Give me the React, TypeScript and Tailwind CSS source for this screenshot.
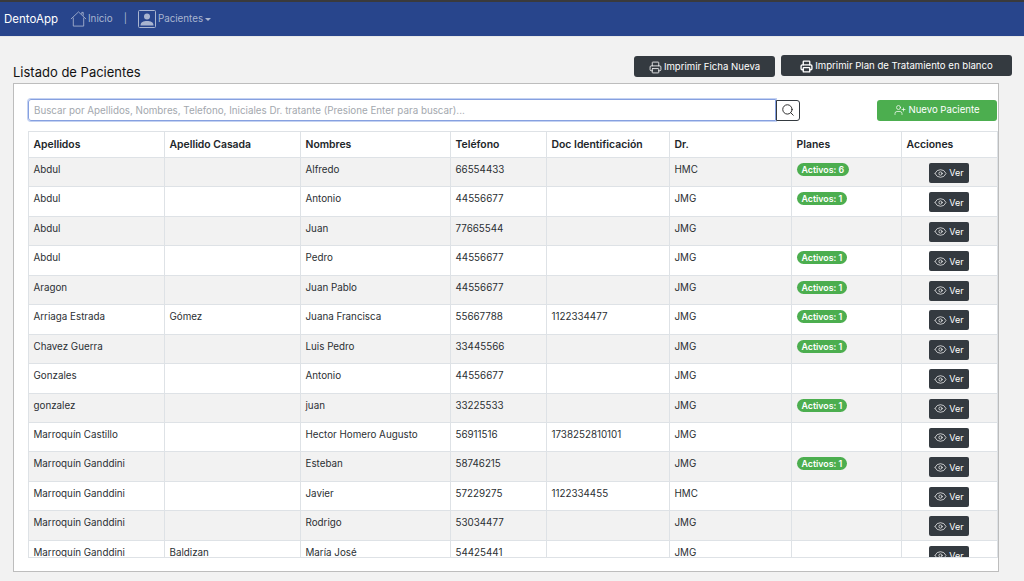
import { Eye, Printer, Search, UserPlus } from "lucide-react";

type Paciente = {
  apellidos: string;
  casada?: string;
  nombres: string;
  telefono: string;
  doc?: string;
  dr: string;
  activos?: number;
};

const pacientes: Paciente[] = [
  { apellidos: "Abdul", nombres: "Alfredo", telefono: "66554433", dr: "HMC", activos: 6 },
  { apellidos: "Abdul", nombres: "Antonio", telefono: "44556677", dr: "JMG", activos: 1 },
  { apellidos: "Abdul", nombres: "Juan", telefono: "77665544", dr: "JMG" },
  { apellidos: "Abdul", nombres: "Pedro", telefono: "44556677", dr: "JMG", activos: 1 },
  { apellidos: "Aragon", nombres: "Juan Pablo", telefono: "44556677", dr: "JMG", activos: 1 },
  { apellidos: "Arriaga Estrada", casada: "Gómez", nombres: "Juana Francisca", telefono: "55667788", doc: "1122334477", dr: "JMG", activos: 1 },
  { apellidos: "Chavez Guerra", nombres: "Luis Pedro", telefono: "33445566", dr: "JMG", activos: 1 },
  { apellidos: "Gonzales", nombres: "Antonio", telefono: "44556677", dr: "JMG" },
  { apellidos: "gonzalez", nombres: "juan", telefono: "33225533", dr: "JMG", activos: 1 },
  { apellidos: "Marroquín Castillo", nombres: "Hector Homero Augusto", telefono: "56911516", doc: "1738252810101", dr: "JMG" },
  { apellidos: "Marroquín Ganddini", nombres: "Esteban", telefono: "58746215", dr: "JMG", activos: 1 },
  { apellidos: "Marroquin Ganddini", nombres: "Javier", telefono: "57229275", doc: "1122334455", dr: "HMC" },
  { apellidos: "Marroquin Ganddini", nombres: "Rodrigo", telefono: "53034477", dr: "JMG" },
  { apellidos: "Marroquín Ganddini", casada: "Baldizan", nombres: "María José", telefono: "54425441", dr: "JMG" },
];

const columnas = [
  { label: "Apellidos", w: "w-[136px]" },
  { label: "Apellido Casada", w: "w-[136px]" },
  { label: "Nombres", w: "w-[150px]" },
  { label: "Teléfono", w: "w-[96px]" },
  { label: "Doc Identificación", w: "w-[123px]" },
  { label: "Dr.", w: "w-[122px]" },
  { label: "Planes", w: "w-[110px]" },
  { label: "Acciones", w: "w-[96px]" },
];

const celda = "border border-[#dee2e6] px-[4.5px] pt-[5px] align-top";

export default function App() {
  return (
    <div className="h-[581px] w-[1024px] overflow-hidden bg-[#f2f2f2] font-['Inter',_'Liberation_Sans',_sans-serif] text-[9.8px] text-[#2b2f33]">
      {/* NAVBAR */}
      <nav className="flex h-[37px] items-center border-t-2 border-b border-t-[#3a3a3c] border-b-[#e8e8e8] bg-[#28458c] pl-[4px]">
        <span className="pt-[2px] text-[11.5px] text-white">DentoApp</span>
        <svg className="ml-[12px]" width="17" height="18" viewBox="0 0 18 18" fill="none" stroke="#a9b5d0" strokeWidth="0.9">
          <path d="M1 9 9 1.5 17 9M3.5 7.5V16.5H14.5V7.5M12.5 4V2H14V5.5" />
        </svg>
        <span className="ml-[1px] text-[#a9b5d0]">Inicio</span>
        <span className="ml-[11px] text-[#a9b5d0]">|</span>
        <svg className="ml-[11px]" width="18" height="18" viewBox="0 0 18 18" fill="none">
          <rect x="0.5" y="0.5" width="17" height="17" rx="1" stroke="#a9b5d0" />
          <circle cx="9" cy="6.5" r="3" fill="#a9b5d0" />
          <path d="M2.5 15.5c0-3.5 3-4.5 6.5-4.5s6.5 1 6.5 4.5z" fill="#a9b5d0" />
        </svg>
        <span className="ml-[2px] text-[#a9b5d0]">Pacientes</span>
        <span className="ml-[2px] border-x-[3px] border-t-[3px] border-x-transparent border-t-[#a9b5d0]" />
      </nav>

      <main className="px-[13px]">
        {/* ENCABEZADO */}
        <div className="flex h-[46px] items-end justify-between">
          <h1 className="pb-[1px] text-[13px] leading-[20px] text-[#111]">Listado de Pacientes</h1>
          <div className="mr-[-1px] flex items-start gap-[6px] self-start pt-[18px] text-[9.6px] text-white">
            <button className="mt-[1px] flex h-[21px] w-[141px] items-center justify-center gap-[2px] rounded-[3px] bg-[#343a40] pt-[1px]">
              <Printer size={13} strokeWidth={1.5} />
              Imprimir Ficha Nueva
            </button>
            <button className="flex h-[21px] w-[231px] items-center justify-center gap-[2px] rounded-[3px] bg-[#343a40] pt-[1px]">
              <Printer size={13} strokeWidth={2.5} />
              Imprimir Plan de Tratamiento en blanco
            </button>
          </div>
        </div>

        {/* TARJETA */}
        <section className="h-[489px] w-[986px] border border-[#bdbdbd] bg-white pl-[14px] pt-[15px]">
          <div className="flex h-[22px] items-center">
            <input
              readOnly
              placeholder="Buscar por Apellidos, Nombres, Telefono, Iniciales Dr. tratante (Presione Enter para buscar)..."
              className="h-[22px] w-[748px] rounded-l-[3px] border border-[#86a0e0] px-[5px] text-[9.8px] shadow-[0_0_0_1px_#c4d2f2] outline-none placeholder:text-[#a3a8ae]"
            />
            <button className="flex h-[21px] w-[24px] items-center justify-center rounded-r-[3px] border border-[#343a40] text-[#222]">
              <Search size={14} strokeWidth={1.6} />
            </button>
            <button className="ml-[77px] flex h-[21px] w-[120px] items-center justify-center gap-[2px] rounded-[3px] bg-[#4cae4f] text-[9.6px] text-white">
              <UserPlus size={12} strokeWidth={1.4} />
              Nuevo Paciente
            </button>
          </div>

          {/* TABLA */}
          <div className="mt-[10px] h-[427px] w-[970px] overflow-hidden border-b border-[#dee2e6]">
            <table className="w-[970px] table-fixed border-collapse">
              <thead>
                <tr className="h-[26px] text-left text-[10.4px] text-[#212529]">
                  {columnas.map((c) => (
                    <th key={c.label} className={`${c.w} border border-[#dee2e6] px-[4.5px] font-semibold`}>
                      {c.label}
                    </th>
                  ))}
                </tr>
              </thead>
              <tbody>
                {pacientes.map((p, i) => (
                  <tr key={i} className={`h-[29.45px] ${i % 2 === 0 ? "bg-[#f2f2f2]" : "bg-white"}`}>
                    <td className={celda}>{p.apellidos}</td>
                    <td className={celda}>{p.casada}</td>
                    <td className={celda}>{p.nombres}</td>
                    <td className={celda}>{p.telefono}</td>
                    <td className={celda}>{p.doc}</td>
                    <td className={celda}>{p.dr}</td>
                    <td className={celda}>
                      {p.activos && (
                        <span className="block w-fit rounded-full bg-[#4cae4f] px-[5px] text-[8.8px] font-semibold leading-[13px] text-white">
                          Activos: {p.activos}
                        </span>
                      )}
                    </td>
                    <td className="border border-[#dee2e6] pt-[5px] align-top">
                      <button className="ml-[27px] flex h-[20px] w-[40px] items-center justify-center gap-[2px] rounded-[2px] bg-[#343a40] text-[9px] text-white">
                        <Eye size={13} strokeWidth={1.3} />
                        Ver
                      </button>
                    </td>
                  </tr>
                ))}
              </tbody>
            </table>
          </div>
        </section>
      </main>
    </div>
  );
}
